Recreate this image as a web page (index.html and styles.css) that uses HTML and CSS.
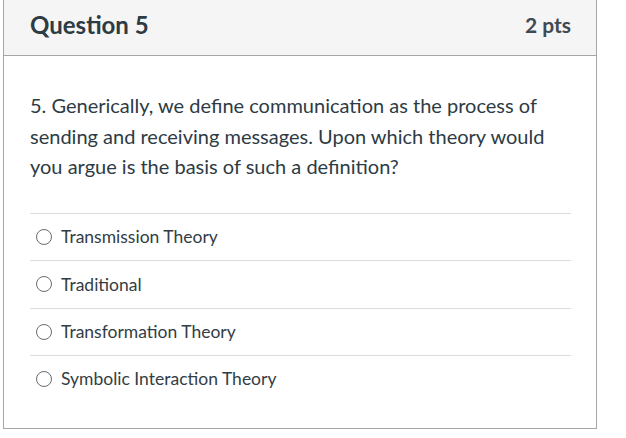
FILE: index.html
```html
<!DOCTYPE html>
<html lang="en">
<head>
<meta charset="utf-8">
<title>Question 5</title>
<link rel="stylesheet" href="styles.css">
</head>
<body>
<div class="card">
  <div class="header">
    <span class="title">Question 5</span>
    <span class="pts">2 pts</span>
  </div>
  <div class="content">
    <p class="question">5. Generically, we define communication as the process of sending and receiving messages. Upon which theory would you argue is the basis of such a definition?</p>
    <ul class="answers">
      <li class="answer"><span class="radio"></span><span class="label">Transmission Theory</span></li>
      <li class="answer"><span class="radio"></span><span class="label">Traditional</span></li>
      <li class="answer"><span class="radio"></span><span class="label">Transformation Theory</span></li>
      <li class="answer"><span class="radio"></span><span class="label">Symbolic Interaction Theory</span></li>
    </ul>
  </div>
</div>
</body>
</html>
```

FILE: styles.css
```css
html, body {
  margin: 0;
  padding: 0;
  background: #ffffff;
}
body {
  font-family: Lato, "Open Sans", sans-serif;
  color: #2d3b45;
}
.card {
  margin-left: 3px;
  width: 592px;
  border: 1px solid #a6a6a6;
  border-top: none;
}
.header {
  height: 56px;
  box-sizing: border-box;
  background: #f5f5f5;
  border-bottom: 1px solid #a6a6a6;
  display: flex;
  justify-content: space-between;
  align-items: center;
  padding: 0 25px 6px 26px;
}
.title {
  font-weight: 700;
  font-size: 24px;
}
.pts {
  font-weight: 700;
  font-size: 21px;
  color: #3f4a52;
}
.content {
  padding: 34px 25px 26px 26px;
}
.question {
  margin: 0 0 31px 0;
  font-size: 20px;
  line-height: 30.5px;
}
.answers {
  list-style: none;
  margin: 0;
  padding: 0;
}
.answer {
  height: 47px;
  box-sizing: border-box;
  border-top: 1px solid #dcdcdc;
  display: flex;
  align-items: center;
  gap: 9px;
  padding-left: 6px;
  font-size: 17.5px;
}
.answer:nth-child(2) {
  height: 48px;
}
.answer:last-child {
  height: 47px;
}
.radio {
  width: 16px;
  height: 16px;
  box-sizing: border-box;
  border: 1px solid #6b6b6b;
  border-radius: 50%;
  background: #fff;
  flex: none;
}
.label {
  color: #333d44;
}
```
